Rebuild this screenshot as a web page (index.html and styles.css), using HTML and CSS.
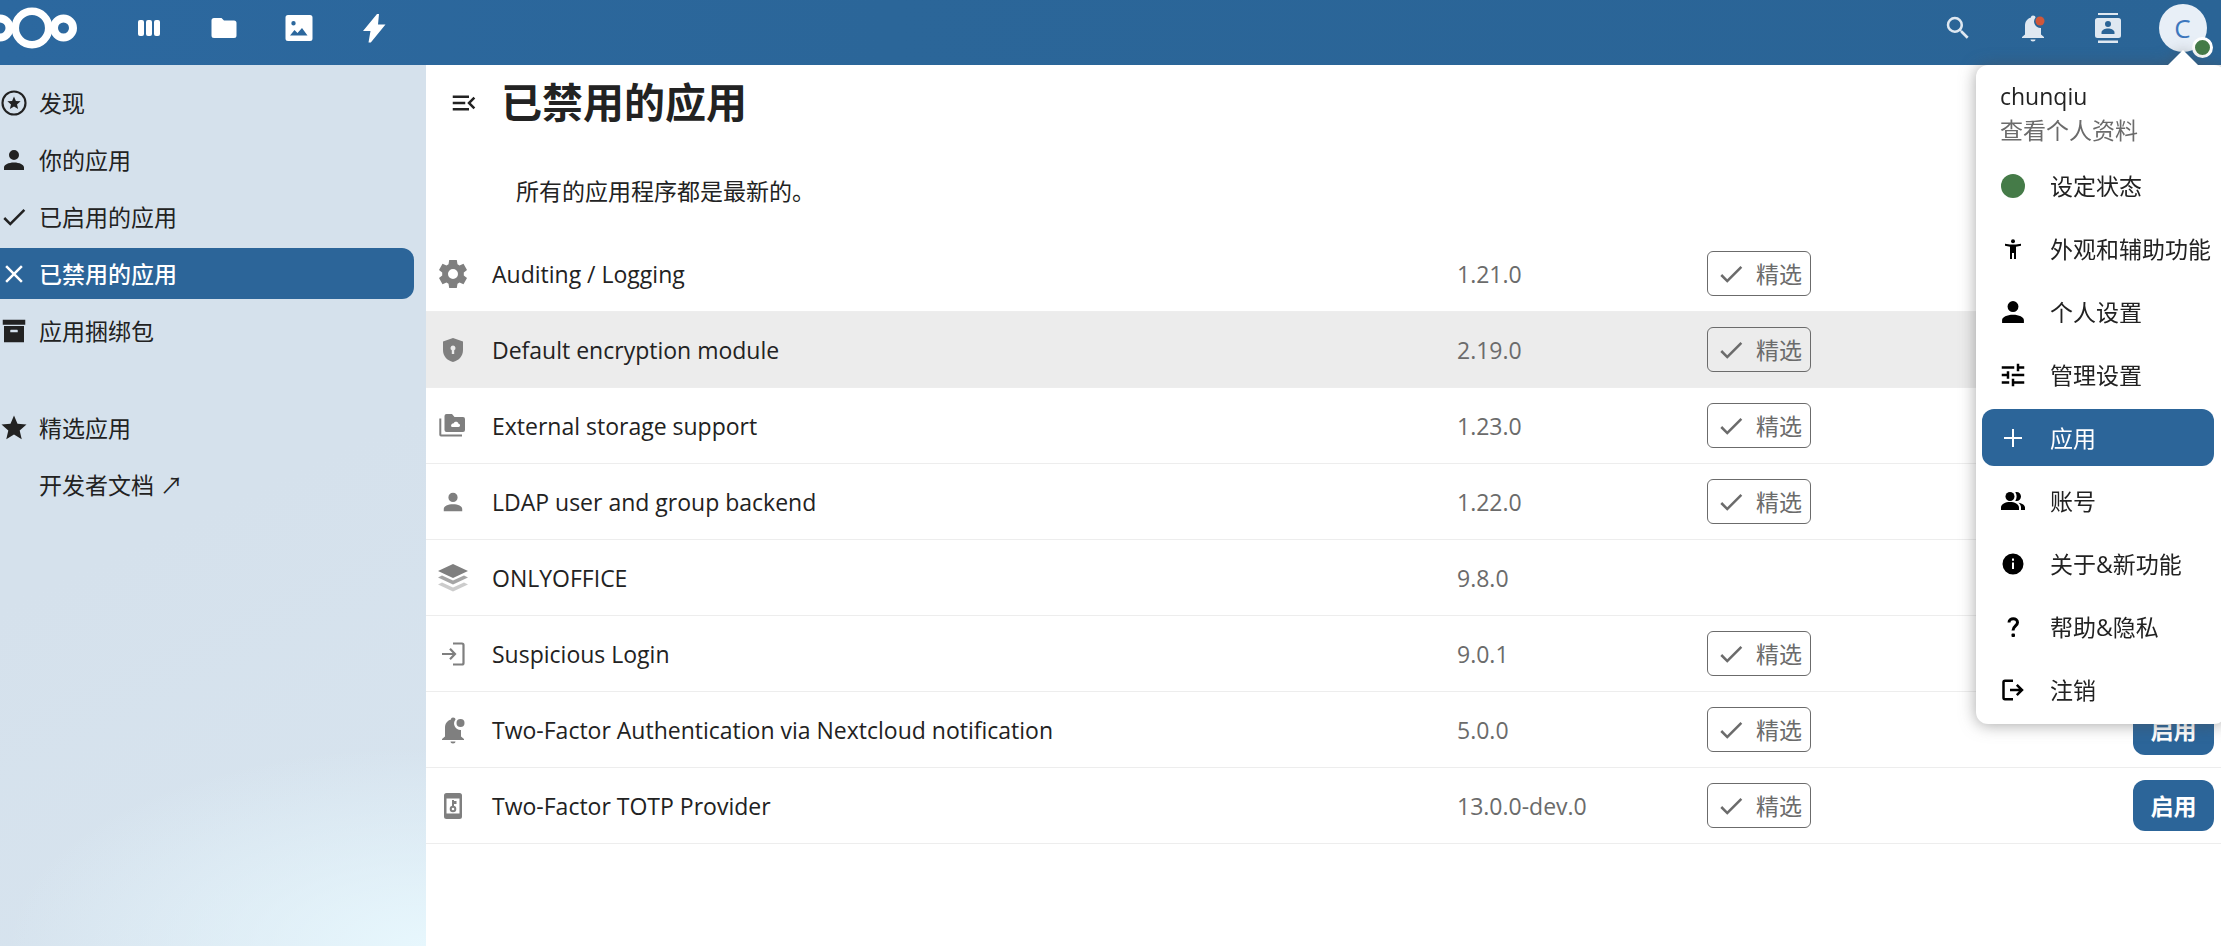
FILE: index.html
```
<!DOCTYPE html>
<html lang="zh-CN">
<head>
  <meta charset="UTF-8">
  <meta name="viewport" content="width=device-width, initial-scale=1.0">
  <title>已禁用的应用 - Nextcloud</title>
  <link rel="stylesheet" href="styles.css">
</head>
<body>
  <!-- Shared icons -->
  <svg class="sprite" aria-hidden="true">
    <symbol id="check" viewBox="0 0 24 24"><path d="M21 7 9 19l-5.500-5.500 1.410-1.410L9 16.170 19.590 5.590 21 7z"/></symbol>
    <symbol id="account" viewBox="0 0 24 24"><path d="M12 4a4 4 0 1 1 0 8 4 4 0 0 1 0-8m0 10c4.420 0 8 1.790 8 4v2H4v-2c0-2.210 3.580-4 8-4z"/></symbol>
    <symbol id="bell" viewBox="0 0 30 30"><path d="M15 2.500c-1.300 0-2 .9-2 2.100-4.200 1.200-6 4.400-6 8.400v8.500L4 24v1h22v-1l-3-2.500V15a6.500 6.500 0 0 1-5.500-10.500c0-1.200-1-2-2.500-2zM12.500 26.500c0 1.300 1 2 2.500 2s2.500-.7 2.500-2z"/></symbol>
  </svg>

  <header class="header">
    <a href="#" class="logo" aria-label="Nextcloud">
      <svg width="78" height="42" viewBox="0 0 78 42" fill="none" stroke="#fff">
        <circle cx="32" cy="21" r="16.700" stroke-width="7.500"/>
        <circle cx="63.500" cy="21" r="9.500" stroke-width="8"/>
        <circle cx="0" cy="21" r="9.500" stroke-width="8"/>
      </svg>
    </a>
    <nav class="app-menu">
      <a href="#" aria-label="仪表板"><svg class="icon" viewBox="0 0 30 30"><rect x="4" y="7" width="6" height="16" rx="2"/><rect x="12" y="7" width="6" height="16" rx="2"/><rect x="20" y="7" width="6" height="16" rx="2"/></svg></a>
      <a href="#" aria-label="文件"><svg class="icon" viewBox="0 0 24 24"><path d="M10 4H4a2 2 0 0 0-2 2v12a2 2 0 0 0 2 2h16a2 2 0 0 0 2-2V8a2 2 0 0 0-2-2h-8l-2-2z"/></svg></a>
      <a href="#" aria-label="照片"><svg class="icon" viewBox="0 0 30 30"><path fill-rule="evenodd" d="M4 2h22a2.500 2.500 0 0 1 2.500 2.500v21A2.500 2.500 0 0 1 26 28H4a2.500 2.500 0 0 1-2.500-2.500v-21A2.500 2.500 0 0 1 4 2zm5.500 6a2.200 2.200 0 1 0 0 4.400 2.200 2.200 0 0 0 0-4.400zM6 22.500h17.500L18 15l-4.500 5-3-3z"/></svg></a>
      <a href="#" aria-label="动态"><svg class="icon" viewBox="0 0 30 30"><path d="M18 1 4 18h7.500L9.500 29.500h2.300L26.500 11.500H19L20 1z"/></svg></a>
    </nav>
    <div class="header-end">
      <button type="button" aria-label="搜索"><svg class="icon" viewBox="0 0 24 24"><path d="M9.500 3A6.500 6.500 0 0 1 16 9.500c0 1.610-.59 3.090-1.560 4.230l.27.270h.79l5 5-1.500 1.500-5-5v-.79l-.27-.27A6.516 6.516 0 0 1 9.500 16a6.500 6.500 0 0 1 0-13m0 2a4.500 4.500 0 1 0 0 9 4.500 4.500 0 0 0 0-9z"/></svg></button>
      <button type="button" aria-label="通知"><svg class="icon" viewBox="0 0 30 30"><use href="#bell"/><circle cx="22" cy="8" r="4.500" fill="#d0573a"/></svg></button>
      <button type="button" aria-label="联系人"><svg class="icon" viewBox="0 0 30 30"><path fill-rule="evenodd" d="M5 0h20v2H5zM5 27.500h20v2.500H5zM4.500 5h21a2.500 2.500 0 0 1 2.500 2.500v15a2.500 2.500 0 0 1-2.500 2.500h-21A2.500 2.500 0 0 1 2 22.500v-15A2.500 2.500 0 0 1 4.500 5zM15 8a3 3 0 1 0 0 6 3 3 0 0 0 0-6zM8.500 21h13v-1.500c0-2.500-3.500-4-6.500-4s-6.500 1.500-6.500 4z"/></svg></button>
      <button type="button" class="user-button" aria-label="设置菜单"><span class="avatar">C<span class="status"></span></span></button>
    </div>

    <div class="user-menu">
      <a href="#" class="profile">
        <span>chunqiu</span>
        <span class="profile-sub">查看个人资料</span>
      </a>
      <ul>
        <li><a href="#"><svg class="icon" viewBox="0 0 30 30"><circle cx="15" cy="15" r="12" fill="#457b48"/></svg>设定状态</a></li>
        <li><a href="#"><svg class="icon" viewBox="0 0 30 30"><circle cx="15" cy="7.200" r="2"/><path d="M7 9.700v2l5 1V25h2v-6h2v6h2V12.700l5-1v-2l-5 .8h-6z"/></svg>外观和辅助功能</a></li>
        <li><a href="#"><svg class="icon" viewBox="1 1 22 22"><use href="#account" width="24" height="24"/></svg>个人设置</a></li>
        <li><a href="#"><svg class="icon" viewBox="0 0 24 24"><path d="M3 17v2h6v-2H3M3 5v2h10V5H3m10 16v-2h8v-2h-8v-2h-2v6h2M7 9v2H3v2h4v2h2V9H7m14 4v-2H11v2h10m-6-4h2V7h4V5h-4V3h-2v6z"/></svg>管理设置</a></li>
        <li><a href="#" class="active"><svg class="icon" viewBox="0 0 30 30"><path d="M14 6h2v8h8v2h-8v8h-2v-8H6v-2h8z"/></svg>应用</a></li>
        <li><a href="#"><svg class="icon" viewBox="0 0 30 30"><circle cx="12" cy="10.500" r="4.500"/><path d="M3 24v-2.500C3 18 7.500 16 12 16s9 2 9 5.500V24zM17.300 6.200c3-.8 5.700 1.300 5.700 4.300s-2.700 5.100-5.700 4.300c1.800-2.500 1.800-6.100 0-8.600zM20.500 16.700c4 .6 6.500 2.600 6.500 4.800V24h-4v-2.500c0-1.900-.9-3.500-2.500-4.800z"/></svg>账号</a></li>
        <li><a href="#"><svg class="icon" viewBox="0 0 30 30"><path fill-rule="evenodd" d="M15 4.500a10.500 10.500 0 1 0 0 21 10.500 10.500 0 0 0 0-21zM14 9.500h2v2.200h-2zm0 4h2V20h-2z"/></svg>关于&amp;新功能</a></li>
        <li><a href="#"><svg class="icon" viewBox="0 0 30 30"><path d="M11 10.500c0-5 8.500-5 8.500 0 0 3.500-4.500 3.500-4.500 8" fill="none" stroke="#000" stroke-width="3"/><rect x="13.500" y="21.500" width="3.500" height="3.500" rx="1"/></svg>帮助&amp;隐私</a></li>
        <li><a href="#"><svg class="icon line" viewBox="0 0 30 30" stroke-width="2.500"><path d="M15 5.700H7q-1.500 0-1.500 1.500v15.600q0 1.500 1.500 1.500h8M12 15h11.500M18.800 9.800 24 15l-5.200 5.200"/></svg>注销</a></li>
      </ul>
    </div>
  </header>

  <div class="content">
    <nav class="sidebar">
      <ul>
        <li><a href="#"><svg class="icon" viewBox="0 0 24 24"><circle cx="12" cy="12" r="9.200" fill="none" stroke="#222" stroke-width="1.700"/><path d="m12 6.800 1.500 3.500 3.800.3-2.900 2.500.9 3.700-3.300-2-3.300 2 .9-3.700-2.900-2.500 3.800-.3z"/></svg>发现</a></li>
        <li><a href="#"><svg class="icon"><use href="#account"/></svg>你的应用</a></li>
        <li><a href="#"><svg class="icon"><use href="#check"/></svg>已启用的应用</a></li>
        <li><a href="#" class="active"><svg class="icon" viewBox="0 0 24 24"><path d="M19 6.410 17.590 5 12 10.590 6.410 5 5 6.410 10.590 12 5 17.590 6.410 19 12 13.410 17.590 19 19 17.590 13.410 12 19 6.410z"/></svg>已禁用的应用</a></li>
        <li><a href="#"><svg class="icon" viewBox="0 0 24 24"><path fill-rule="evenodd" d="M3 3h18v4H3zM4 8h16v13H4zM9.500 11a.5.5 0 0 0-.5.5V13h6v-1.500a.5.5 0 0 0-.5-.5z"/></svg>应用捆绑包</a></li>
        <li class="spaced"><a href="#"><svg class="icon" viewBox="0 0 24 24"><path d="M12 17.270 18.180 21l-1.640-7.030L22 9.240l-7.190-.61L12 2 9.190 8.630 2 9.240l5.450 4.730L5.820 21 12 17.270z"/></svg>精选应用</a></li>
        <li><a href="#"><span class="icon"></span>开发者文档 ↗</a></li>
      </ul>
    </nav>

    <main class="main">
      <div class="title-bar">
        <button type="button" class="toggle" aria-label="关闭导航"><svg class="icon" viewBox="0 0 24 24"><path d="M21 15.610 19.590 17l-5.010-5 5.010-5L21 8.390 17.440 12 21 15.610M3 6h13v2H3V6m0 7v-2h10v2H3m0 5v-2h13v2H3z"/></svg></button>
        <h1>已禁用的应用</h1>
      </div>
      <p class="message">所有的应用程序都是最新的。</p>

      <table class="apps">
        <colgroup><col class="col-icon"><col><col class="col-version"><col class="col-level"><col class="col-actions"></colgroup>
        <tbody>
          <tr>
            <td><svg class="icon" viewBox="0 0 30 30"><path fill-rule="evenodd" d="M11.200 1h7.600l.7 4.200 2 1.200 4-1.600 3.500 6.200-3.200 2.600v2.800l3.200 2.600-3.500 6.200-4-1.600-2 1.200-.7 4.200h-7.600l-.7-4.200-2-1.200-4 1.600L1 19l3.200-2.600v-2.800L1 11l3.500-6.200 4 1.600 2-1.200zM15 10a5 5 0 1 0 0 10 5 5 0 0 0 0-10z"/></svg></td>
            <td class="name">Auditing / Logging</td><td>1.21.0</td>
            <td><span class="badge"><svg class="icon-small"><use href="#check"/></svg>精选</span></td>
            <td class="actions"><button type="button" class="btn">启用</button></td>
          </tr>
          <tr class="selected">
            <td><svg class="icon" viewBox="0 0 30 30"><path fill-rule="evenodd" d="M15 3 25 6.500V15c0 6-4 10.500-10 12C9 25.500 5 21 5 15V6.500zM15 10.500a2.500 2.500 0 0 0-1.200 4.700V19h2.400v-3.800A2.500 2.500 0 0 0 15 10.500z"/></svg></td>
            <td class="name">Default encryption module</td><td>2.19.0</td>
            <td><span class="badge"><svg class="icon-small"><use href="#check"/></svg>精选</span></td>
            <td class="actions"><button type="button" class="btn">启用</button></td>
          </tr>
          <tr>
            <td><svg class="icon" viewBox="0 0 30 30"><path fill-rule="evenodd" d="M8.500 3H14l2.500 3H25a2 2 0 0 1 2 2v11a2 2 0 0 1-2 2H8.500a2 2 0 0 1-2-2V5a2 2 0 0 1 2-2zM14 16h6.500c2 0 2-3 0-3.200-.5-2.500-4-2.500-4.700-.5-3 0-3.300 3.700-1.800 3.700z"/><path d="M1.300 7.500h2V23.500H24v2H3a1.700 1.700 0 0 1-1.700-1.700z"/></svg></td>
            <td class="name">External storage support</td><td>1.23.0</td>
            <td><span class="badge"><svg class="icon-small"><use href="#check"/></svg>精选</span></td>
            <td class="actions"><button type="button" class="btn">启用</button></td>
          </tr>
          <tr>
            <td><svg class="icon" viewBox="-1 -1 26 26"><use href="#account" width="24" height="24"/></svg></td>
            <td class="name">LDAP user and group backend</td><td>1.22.0</td>
            <td><span class="badge"><svg class="icon-small"><use href="#check"/></svg>精选</span></td>
            <td class="actions"><button type="button" class="btn">启用</button></td>
          </tr>
          <tr>
            <td><svg class="icon" viewBox="0 0 30 30"><path d="m15 1 15 7-15 7L0 8z"/><path opacity=".7" d="m4 12.500 11 5 11-5 4 2-15 7-15-7z"/><path opacity=".4" d="m4 19.500 11 5 11-5 4 2-15 7-15-7z"/></svg></td>
            <td class="name">ONLYOFFICE</td><td>9.8.0</td>
            <td></td>
            <td class="actions"><button type="button" class="btn">启用</button></td>
          </tr>
          <tr>
            <td><svg class="icon line" viewBox="0 0 30 30" stroke-width="2.200"><path d="M15 4.500h9q1.500 0 1.500 1.500v18q0 1.500-1.500 1.500h-9M4 15h12.500M12 9.800l5 5.200-5 5.200"/></svg></td>
            <td class="name">Suspicious Login</td><td>9.0.1</td>
            <td><span class="badge"><svg class="icon-small"><use href="#check"/></svg>精选</span></td>
            <td class="actions"><button type="button" class="btn">启用</button></td>
          </tr>
          <tr>
            <td><svg class="icon" viewBox="0 0 30 30"><use href="#bell"/><circle cx="22.500" cy="8" r="4"/></svg></td>
            <td class="name">Two-Factor Authentication via Nextcloud notification</td><td>5.0.0</td>
            <td><span class="badge"><svg class="icon-small"><use href="#check"/></svg>精选</span></td>
            <td class="actions"><button type="button" class="btn">启用</button></td>
          </tr>
          <tr>
            <td><svg class="icon" viewBox="0 0 30 30"><path fill-rule="evenodd" d="M8.500 2h13A2.500 2.500 0 0 1 24 4.500v21a2.500 2.500 0 0 1-2.500 2.500h-13A2.500 2.500 0 0 1 6 25.500v-21A2.500 2.500 0 0 1 8.500 2zM8.500 7.500v15h13v-15z"/><circle cx="15" cy="18" r="2.300" fill="none" stroke="#7f7f7f" stroke-width="2"/><path d="M14 9h2v1h2.500v3H16v3h-2z"/></svg></td>
            <td class="name">Two-Factor TOTP Provider</td><td>13.0.0-dev.0</td>
            <td><span class="badge"><svg class="icon-small"><use href="#check"/></svg>精选</span></td>
            <td class="actions"><button type="button" class="btn">启用</button></td>
          </tr>
        </tbody>
      </table>
    </main>
  </div>
</body>
</html>
```
FILE: styles.css
```
* { box-sizing: border-box; }

body {
  margin: 0;
  min-height: 100vh;
  display: flex;
  flex-direction: column;
  overflow-x: hidden;
  font-family: "Open Sans", "Noto Sans CJK SC", sans-serif;
  font-size: 23px;
  line-height: 34px;
  color: #222;
  background: #fff;
}

a { color: inherit; text-decoration: none; }

ul {
  list-style: none;
  margin: 0;
  padding: 0;
}

button {
  border: none;
  padding: 0;
  background: none;
  font: inherit;
  cursor: pointer;
}

.sprite { display: none; }

.icon {
  width: 30px;
  height: 30px;
  flex: none;
  fill: currentColor;
}

.icon.line {
  fill: none;
  stroke: currentColor;
}

.icon-small {
  width: 30px;
  height: 30px;
  flex: none;
  fill: currentColor;
}

/* Header */
.header {
  position: relative;
  z-index: 10;
  display: flex;
  align-items: center;
  height: 65px;
  padding-bottom: 9px;
  background: linear-gradient(90deg, #2c689f, #2b6699 40%, #2a6496);
}

.logo { display: flex; }

.app-menu {
  display: flex;
  margin-left: 33px;
  color: #fff;
}

.header-end {
  display: flex;
  margin-left: auto;
  padding-right: 1px;
  color: #dfe8f1;
}

.app-menu a, .header-end button {
  display: flex;
  align-items: center;
  justify-content: center;
  width: 75px;
  height: 48px;
  color: inherit;
}

.avatar {
  position: relative;
  width: 48px;
  height: 48px;
  border-radius: 50%;
  background: #e8eff7;
  color: #3d77bd;
  font-size: 26px;
  line-height: 48px;
}

.status {
  position: absolute;
  right: -6px;
  bottom: -6px;
  width: 21px;
  height: 21px;
  border: 3px solid #fff;
  border-radius: 50%;
  background: #457b48;
}

/* User menu */
.user-menu {
  position: absolute;
  top: 65px;
  right: -5px;
  width: 250px;
  padding: 6px 12px 6px 6px;
  border-radius: 12px;
  background: #fff;
  filter: drop-shadow(0 1px 8px rgba(77, 77, 77, 0.5));
}

.user-menu::before {
  content: "";
  position: absolute;
  top: -15px;
  right: 28px;
  border: 15px solid transparent;
  border-top: none;
  border-bottom-color: #fff;
}

.profile {
  display: flex;
  flex-direction: column;
  padding: 8px 18px 10px;
}

.profile-sub { color: #6b6b6b; }

.user-menu ul {
  display: flex;
  flex-direction: column;
  gap: 6px;
}

.user-menu li a {
  display: flex;
  align-items: center;
  gap: 22px;
  height: 57px;
  padding-left: 16px;
  border-radius: 12px;
  white-space: nowrap;
}

.user-menu .icon { color: #000; }

.user-menu .active .icon { color: #fff; }

.user-menu li a.active, .sidebar a.active {
  background: #2c6599;
  color: #fff;
}

/* Sidebar */
.content {
  display: flex;
  flex: 1;
}

.sidebar {
  flex: none;
  width: 426px;
  padding: 12px 12px 12px 0;
  background: radial-gradient(ellipse 420px 200px at 100% 100%, #e7f7fd, rgba(215, 231, 241, 0)),
    linear-gradient(155deg, #d5e1ec 50%, #d7e4ef);
}

.sidebar ul {
  display: flex;
  flex-direction: column;
  gap: 6px;
}

.sidebar a {
  display: flex;
  align-items: center;
  gap: 10px;
  height: 51px;
  border-radius: 0 12px 12px 0;
}

.sidebar .icon { margin-left: -1px; }

.sidebar a.active { font-weight: 500; }

.sidebar .spaced { margin-top: 40px; }

/* App list */
.main {
  flex: 1;
  min-width: 0;
}

.title-bar {
  display: flex;
  align-items: center;
  gap: 12px;
  padding: 12px 12px 0;
}

.toggle {
  display: flex;
  align-items: center;
  justify-content: center;
  width: 51px;
  height: 51px;
  color: #222;
}

h1 {
  margin: 0;
  font-size: 41px;
  line-height: 51px;
}

.message {
  margin: 46px 0 28px 90px;
}

.apps {
  width: 100%;
  table-layout: fixed;
  border-collapse: separate;
  border-spacing: 0;
}

.col-icon { width: 66px; }
.col-version { width: 250px; }
.col-level { width: 196px; }
.col-actions { width: 318px; }

.apps td {
  height: 76px;
  padding: 0;
  border-bottom: 1px solid #ededed;
  color: #6b6b6b;
}

.apps td.name { color: #222; }

.apps .icon {
  display: block;
  margin-left: 12px;
  color: #7f7f7f;
}

.apps .selected td { background: #ececec; }

.badge {
  display: flex;
  align-items: center;
  justify-content: space-between;
  width: 104px;
  height: 45px;
  padding: 0 8px;
  border: 1px solid #6b6b6b;
  border-radius: 6px;
}

.apps td.actions {
  padding-right: 7px;
  text-align: right;
}

.btn {
  width: 81px;
  height: 51px;
  border-radius: 12px;
  background: #2c6599;
  color: #fff;
  font-weight: bold;
}
```
